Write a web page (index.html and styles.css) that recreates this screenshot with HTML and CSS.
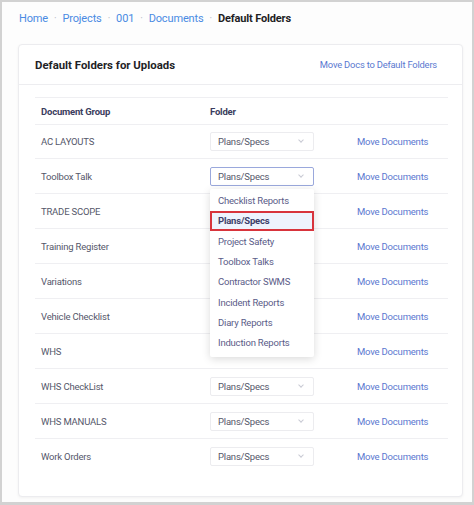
FILE: index.html
```html
<!DOCTYPE html>
<html>
<head>
<meta charset="utf-8">
<link rel="stylesheet" href="styles.css">
</head>
<body>
<div class="frame">
  <nav class="crumbs">
    <a class="crumb">Home</a><span class="sep">·</span>
    <a class="crumb">Projects</a><span class="sep">·</span>
    <a class="crumb">001</a><span class="sep">·</span>
    <a class="crumb">Documents</a><span class="sep">·</span>
    <span class="current">Default Folders</span>
  </nav>
  <section class="card">
    <header class="card-head">
      <h2 class="title">Default Folders for Uploads</h2>
      <a class="head-link">Move Docs to Default Folders</a>
    </header>
    <div class="card-body">
      <div class="table">
        <div class="row head">
          <div class="c1">Document Group</div>
          <div class="c2">Folder</div>
          <div class="c3"></div>
        </div>
        <div class="row"><div class="c1">AC LAYOUTS</div><div class="c2"><div class="select">Plans/Specs<span class="chev"></span></div></div><div class="c3"><a class="link">Move Documents</a></div></div>
        <div class="row"><div class="c1">Toolbox Talk</div><div class="c2 menuhost"><div class="select active">Plans/Specs<span class="chev"></span></div>
          <ul class="menu">
            <li>Checklist Reports</li>
            <li class="sel">Plans/Specs</li>
            <li>Project Safety</li>
            <li>Toolbox Talks</li>
            <li>Contractor SWMS</li>
            <li>Incident Reports</li>
            <li>Diary Reports</li>
            <li>Induction Reports</li>
          </ul>
        </div><div class="c3"><a class="link">Move Documents</a></div></div>
        <div class="row"><div class="c1">TRADE SCOPE</div><div class="c2"></div><div class="c3"><a class="link">Move Documents</a></div></div>
        <div class="row"><div class="c1">Training Register</div><div class="c2"></div><div class="c3"><a class="link">Move Documents</a></div></div>
        <div class="row"><div class="c1">Variations</div><div class="c2"></div><div class="c3"><a class="link">Move Documents</a></div></div>
        <div class="row"><div class="c1">Vehicle Checklist</div><div class="c2"></div><div class="c3"><a class="link">Move Documents</a></div></div>
        <div class="row"><div class="c1">WHS</div><div class="c2"></div><div class="c3"><a class="link">Move Documents</a></div></div>
        <div class="row"><div class="c1">WHS CheckList</div><div class="c2"><div class="select">Plans/Specs<span class="chev"></span></div></div><div class="c3"><a class="link">Move Documents</a></div></div>
        <div class="row"><div class="c1">WHS MANUALS</div><div class="c2"><div class="select">Plans/Specs<span class="chev"></span></div></div><div class="c3"><a class="link">Move Documents</a></div></div>
        <div class="row last"><div class="c1">Work Orders</div><div class="c2"><div class="select">Plans/Specs<span class="chev"></span></div></div><div class="c3"><a class="link">Move Documents</a></div></div>
      </div>
    </div>
  </section>
</div>
</body>
</html>
```
FILE: styles.css
```css
* { box-sizing: border-box; }
html, body { margin: 0; padding: 0; }
body {
  font-family: Roboto, "Liberation Sans", Arial, sans-serif;
  background: #fff;
}
.frame {
  width: 474px;
  height: 505px;
  border: 2px solid #d2d2d2;
  border-bottom-width: 3px;
  background: #fdfdfd;
  padding: 0 9px 0 16px;
  overflow: hidden;
}
.crumbs {
  height: 32px;
  display: flex;
  align-items: center;
  padding-left: 1px;
  font-size: 11px;
  letter-spacing: -0.15px;
}
.crumb { color: #4a8be3; }
.sep { color: #b8bcc8; margin: 0 6px; font-size: 10px; }
.current { color: #1e1e24; font-weight: 700; }
.card {
  margin-top: 10px;
  background: #fff;
  border: 1px solid #ececef;
  border-radius: 4px;
  box-shadow: 0 1px 3px rgba(0,0,0,0.05);
  height: 453px;
}
.card-head {
  height: 40px;
  display: flex;
  align-items: center;
  justify-content: space-between;
  padding: 0 25px 0 16px;
  border-bottom: 1px solid #ededf0;
}
.title {
  margin: 0;
  font-size: 11.4px;
  font-weight: 700;
  color: #1f1f27;
}
.head-link { color: #5a78d0; font-size: 9.4px; letter-spacing: -0.2px; }
.card-body { padding: 12px 14px 0 16px; }
.table { border-top: 1px solid #efeff2; }
.row {
  display: flex;
  align-items: center;
  height: 35px;
  border-bottom: 1px solid #efeff2;
  font-size: 9.5px;
  letter-spacing: -0.2px;
  color: #55576a;
}
.row.head { height: 27px; font-weight: 700; color: #3b3d5e; }
.row.last { border-bottom: none; }
.row:nth-child(2) { height: 34px; }
.c1 { width: 175px; padding-left: 6px; }
.c2 { width: 147px; position: relative; }
.c3 { flex: 1; }
.select {
  width: 104px;
  height: 19px;
  border: 1px solid #ececef;
  border-radius: 2px;
  display: flex;
  align-items: center;
  padding-left: 7px;
  color: #55576a;
  position: relative;
  background: #fff;
}
.select.active { border-color: #9aa8dc; }
.chev {
  position: absolute;
  right: 10px;
  top: 5px;
  width: 4px;
  height: 4px;
  border-right: 1px solid #c8cad4;
  border-bottom: 1px solid #c8cad4;
  transform: rotate(45deg);
}
.link { color: #5a78d0; }
.menu {
  position: absolute;
  left: 0;
  top: 22px;
  width: 104px;
  margin: 0;
  padding: 2px 0 4px;
  list-style: none;
  background: #fff;
  box-shadow: 0 2px 8px rgba(0,0,0,0.15);
  border-radius: 2px;
  z-index: 5;
}
.menu li {
  height: 20.3px;
  display: flex;
  align-items: center;
  padding-left: 8px;
  color: #5a5c88;
}
.menu li.sel {
  background: #eef3fd;
  font-weight: 700;
  color: #3d3f6a;
  outline: 2px solid #d8343c;
  outline-offset: -2px;
}
```
